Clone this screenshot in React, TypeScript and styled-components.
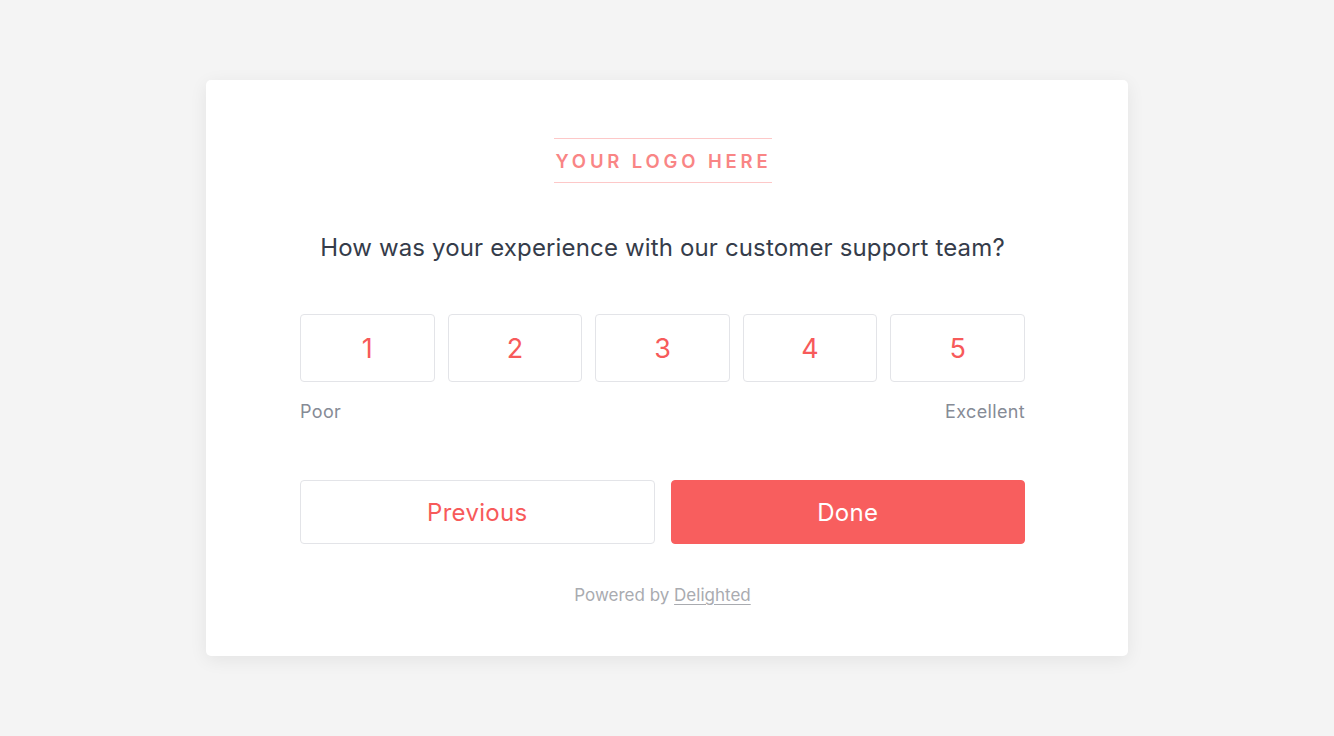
import React from "react";
import styled, { createGlobalStyle } from "styled-components";

const Global = createGlobalStyle`
  html, body { margin: 0; padding: 0; background: #f4f4f4; }
  body { font-family: Inter, "Liberation Sans", sans-serif; -webkit-font-smoothing: antialiased; }
`;

const Page = styled.div`
  width: 1334px;
  height: 736px;
  display: flex;
  justify-content: center;
  padding-top: 80px;
  box-sizing: border-box;
`;

const Card = styled.div`
  width: 922px;
  height: 576px;
  box-sizing: border-box;
  background: #fff;
  border-radius: 5px;
  box-shadow: 0 4px 18px rgba(0, 0, 0, 0.07);
  padding: 58px 103px 0 94px;
  display: flex;
  flex-direction: column;
  align-items: center;
`;

const Logo = styled.div`
  width: 218px;
  height: 45px;
  box-sizing: border-box;
  border-top: 1px solid #fdc8c8;
  border-bottom: 1px solid #fdc8c8;
  display: flex;
  align-items: center;
  justify-content: flex-start;
  white-space: nowrap;
  color: #f98585;
  font-size: 18.5px;
  font-weight: 600;
  letter-spacing: 3.85px;
  padding-left: 2px;
`;

const Question = styled.h1`
  margin: 50px 0 0;
  font-size: 24px;
  font-weight: 400;
  color: #353c4a;
  line-height: 30px;
  letter-spacing: 0.15px;
`;

const Scale = styled.div`
  margin-top: 51px;
  width: 100%;
  display: grid;
  grid-template-columns: repeat(5, 1fr);
  gap: 13px;
`;

const ScoreButton = styled.button`
  height: 68px;
  background: #fff;
  border: 1px solid #e3e4e8;
  border-radius: 4px;
  color: #f75a5a;
  font-family: inherit;
  font-size: 27px;
  font-weight: 400;
  cursor: pointer;
`;

const Labels = styled.div`
  width: 100%;
  display: flex;
  justify-content: space-between;
  margin-top: 19px;
  color: #868b96;
  font-size: 18px;
  letter-spacing: 0.35px;
  line-height: 22px;
`;

const Actions = styled.div`
  width: 100%;
  margin-top: 57px;
  display: grid;
  grid-template-columns: 1fr 1fr;
  gap: 16px;
`;

const ActionButton = styled.button<{ $primary?: boolean }>`
  height: 64px;
  border-radius: 4px;
  font-family: inherit;
  font-size: 24px;
  font-weight: 400;
  letter-spacing: 0.3px;
  cursor: pointer;
  border: 1px solid ${(p) => (p.$primary ? "#f85e5e" : "#e3e4e8")};
  background: ${(p) => (p.$primary ? "#f85e5e" : "#fff")};
  color: ${(p) => (p.$primary ? "#fff" : "#f75a5a")};
`;

const Powered = styled.div`
  margin-top: 40px;
  font-size: 17px;
  color: #a9abb0;
  line-height: 22px;
`;

const Brand = styled.a`
  color: #a9abb0;
  text-decoration: underline;
  text-underline-offset: 3px;
`;

export default function App() {
  return (
    <>
      <Global />
      <Page>
        <Card>
          <Logo>YOUR LOGO HERE</Logo>
          <Question>How was your experience with our customer support team?</Question>
          <Scale>
            {[1, 2, 3, 4, 5].map((n) => (
              <ScoreButton key={n}>{n}</ScoreButton>
            ))}
          </Scale>
          <Labels>
            <span>Poor</span>
            <span>Excellent</span>
          </Labels>
          <Actions>
            <ActionButton>Previous</ActionButton>
            <ActionButton $primary>Done</ActionButton>
          </Actions>
          <Powered>
            Powered by <Brand href="#">Delighted</Brand>
          </Powered>
        </Card>
      </Page>
    </>
  );
}
